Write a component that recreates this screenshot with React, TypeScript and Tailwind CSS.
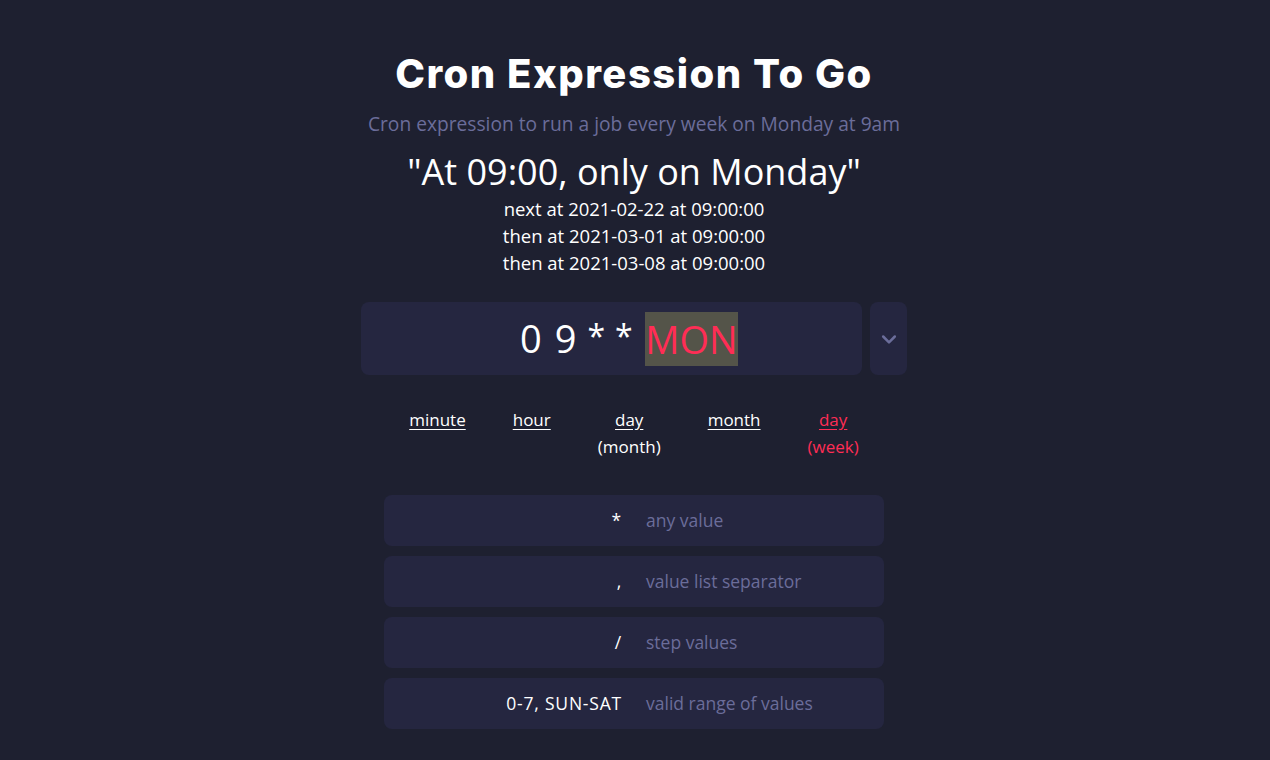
import React from "react";

const fields = [
  { top: "minute", bottom: "", active: false },
  { top: "hour", bottom: "", active: false },
  { top: "day", bottom: "(month)", active: false },
  { top: "month", bottom: "", active: false },
  { top: "day", bottom: "(week)", active: true },
];

const legend = [
  { sym: "*", desc: "any value" },
  { sym: ",", desc: "value list separator" },
  { sym: "/", desc: "step values" },
  { sym: "0-7, SUN-SAT", desc: "valid range of values" },
];

export default function App() {
  return (
    <div
      className="min-h-[760px] w-full bg-[#1e2030] text-white flex flex-col items-center pr-[2px]"
      style={{ fontFamily: '"Open Sans", "Noto Sans", sans-serif' }}
    >
      <h1
        className="mt-[50px] text-[40px] leading-[48px] font-extrabold tracking-[1.5px]"
        style={{ fontFamily: 'Inter, "Liberation Sans", sans-serif' }}
      >
        Cron Expression To Go
      </h1>
      <p className="mt-[13px] text-[19.2px] leading-[26px] text-[#6b6d9a]">
        Cron expression to run a job every week on Monday at 9am
      </p>
      <div className="mt-[12px] text-[36px] leading-[46px]">"At 09:00, only on Monday"</div>
      <div className="flex flex-col items-center text-[18.5px] leading-[27px]">
        <span>next at 2021-02-22 at 09:00:00</span>
        <span>then at 2021-03-01 at 09:00:00</span>
        <span>then at 2021-03-08 at 09:00:00</span>
      </div>

      <div className="mt-[26px] flex gap-[8px]">
        <div className="w-[501px] h-[73px] rounded-[8px] bg-[#252640] flex items-center pl-[159px] text-[38px]">
          <span className="mr-[13px]">0</span>
          <span className="mr-[11px]">9</span>
          <span className="mr-[10px] text-[32px] -translate-y-[3px]">*</span>
          <span className="mr-[12px] text-[32px] -translate-y-[3px]">*</span>
          <span className="bg-[#545449] text-[#ff2d55] h-[54px] leading-[54px] px-[0.5px]">MON</span>
        </div>
        <button className="w-[37px] h-[73px] rounded-[8px] bg-[#252640] flex items-center justify-center">
          <svg width="20" height="20" viewBox="0 0 24 24" fill="none" stroke="#6b6d9a" strokeWidth="3" strokeLinecap="round" strokeLinejoin="round">
            <path d="M5 9l7 7 7-7" />
          </svg>
        </button>
      </div>

      <div className="mt-[31px] flex gap-[47px] text-[17px] leading-[27px]">
        {fields.map((f, i) => (
          <div
            key={i}
            className={`flex flex-col items-center ${f.active ? "text-[#ff2d55]" : "text-white"}`}
          >
            <span className="underline underline-offset-[3px]">{f.top}</span>
            {f.bottom && <span>{f.bottom}</span>}
          </div>
        ))}
      </div>

      <div className="mt-[35px] flex flex-col gap-[10px] w-[500px]">
        {legend.map((r, i) => (
          <div key={i} className="h-[51px] rounded-[8px] bg-[#252640] grid grid-cols-2 gap-[24px] items-center text-[17.5px]">
            <span className="text-right tracking-[0.8px]">{r.sym}</span>
            <span className="text-[#6b6d9a]">{r.desc}</span>
          </div>
        ))}
      </div>
    </div>
  );
}
